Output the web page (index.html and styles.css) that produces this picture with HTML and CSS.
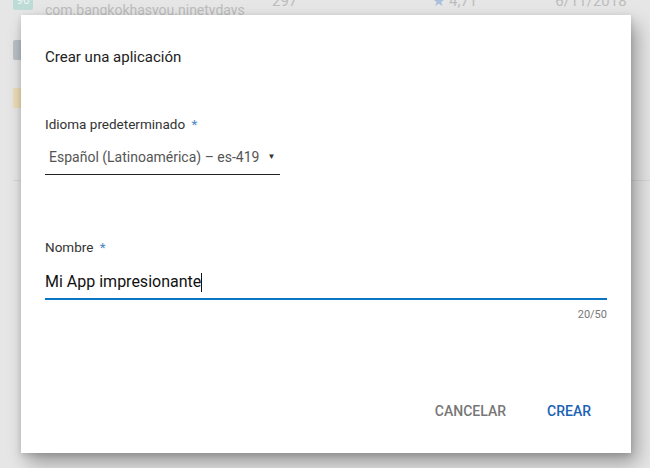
FILE: index.html
```html
<!DOCTYPE html>
<html lang="es">

<head>
    <meta charset="UTF-8">
    <meta name="viewport" content="width=device-width, initial-scale=1.0">
    <title>Crear una aplicación</title>
    <link rel="stylesheet" href="styles.css">
</head>

<body>

    <div class="page">
        <div class="app-row first">
            <span class="app-icon teal">90</span>
            <span class="app-name">com.bangkokhasyou.ninetydays</span>
            <span class="app-num">297</span>
            <span class="app-rating"><span class="star">&#9733;</span> 4,71</span>
            <span class="app-date">6/11/2018</span>
        </div>
        <div class="app-row">
            <span class="app-icon gray"></span>
        </div>
        <div class="app-row">
            <span class="app-icon yellow"></span>
        </div>
        <div class="divider"></div>
    </div>

    <div class="dialog">
        <h2 class="dialog-title">Crear una aplicación</h2>

        <div class="field lang-field">
            <label>Idioma predeterminado <span class="req">*</span></label>
            <div class="select">
                <span>Español (Latinoamérica) – es-419</span>
                <span class="caret">&#9660;</span>
            </div>
        </div>

        <div class="field name-field">
            <label>Nombre <span class="req">*</span></label>
            <div class="input"><span>Mi App impresionante</span><span class="cursor"></span></div>
            <div class="counter">20/50</div>
        </div>

        <div class="actions">
            <button class="btn btn-cancel">Cancelar</button>
            <button class="btn btn-ok">Crear</button>
        </div>
    </div>

</body>

</html>
```

FILE: styles.css
```css
body {
    margin: 0;
    background-color: #e6e6e6;
    font-family: Roboto, Arial, sans-serif;
    height: 468px;
    overflow: hidden;
    position: relative;
}

.page {
    margin-top: -12px;
    padding: 0 0 0 13px;
}

.app-row {
    display: flex;
    align-items: center;
    height: 48px;
    color: #bdbdbd;
    font-size: 15px;
}

.app-row.first {
    height: 36px;
    align-items: flex-start;
    padding-top: 2px;
}

.app-icon {
    width: 20px;
    height: 20px;
    border-radius: 2px;
    font-size: 12px;
    color: #eef5f3;
    text-align: center;
    line-height: 20px;
}

.app-icon.teal {
    background-color: #bddcd6;
}

.app-icon.gray {
    background-color: #b9bfc4;
}

.app-icon.yellow {
    background-color: #ecdcb6;
}

.app-name {
    margin-left: 12px;
    margin-top: 12px;
    width: 227px;
    font-size: 14px;
    white-space: nowrap;
}

.app-num {
    margin-top: 2px;
}

.app-rating {
    margin-left: 135px;
    margin-top: 2px;
}

.star {
    color: #a9c0dc;
}

.app-date {
    margin-left: 78px;
    margin-top: 2px;
}

.divider {
    margin-top: 58px;
    height: 1px;
    background-color: #d8d8d8;
}

.dialog {
    position: absolute;
    left: 21px;
    top: 15px;
    width: 610px;
    height: 438px;
    box-sizing: border-box;
    padding: 24px 24px;
    background-color: #fff;
    box-shadow: 6px 10px 18px rgba(0, 0, 0, 0.32), 0 2px 6px rgba(0, 0, 0, 0.15);
    display: flex;
    flex-direction: column;
}

.dialog-title {
    margin: 8px 0 0;
    font-size: 15px;
    line-height: 20px;
    font-weight: 400;
    color: #212121;
}

.field label {
    display: block;
    font-size: 13.5px;
    line-height: 18px;
    color: #333;
}

.req {
    color: #4a86c5;
    margin-left: 3px;
}

.lang-field {
    margin-top: 48px;
}

.select {
    display: flex;
    align-items: center;
    gap: 8px;
    width: 235px;
    box-sizing: border-box;
    margin-top: 15px;
    padding: 0 0 8px 4px;
    border-bottom: 1px solid #222;
    font-size: 14px;
    line-height: 18px;
    color: #555;
}

.caret {
    font-size: 8px;
    color: #333;
}

.name-field {
    margin-top: 63px;
}

.input {
    margin-top: 16px;
    padding-bottom: 6px;
    border-bottom: 2px solid #0b74c4;
    font-size: 16px;
    line-height: 20px;
    color: #111;
    display: flex;
    align-items: center;
}

.cursor {
    display: inline-block;
    width: 1px;
    height: 19px;
    background-color: #111;
}

.counter {
    margin-top: 8px;
    text-align: right;
    font-size: 11px;
    line-height: 14px;
    color: #777;
}

.actions {
    margin-top: auto;
    margin-bottom: 6px;
    display: flex;
    justify-content: flex-end;
    gap: 9px;
}

.btn {
    background: none;
    border: none;
    padding: 4px 16px;
    font-family: Roboto, Arial, sans-serif;
    font-size: 14px;
    line-height: 16px;
    font-weight: 500;
    text-transform: uppercase;
    cursor: pointer;
}

.btn-cancel {
    color: #777;
}

.btn-ok {
    color: #1a62b3;
}
```
